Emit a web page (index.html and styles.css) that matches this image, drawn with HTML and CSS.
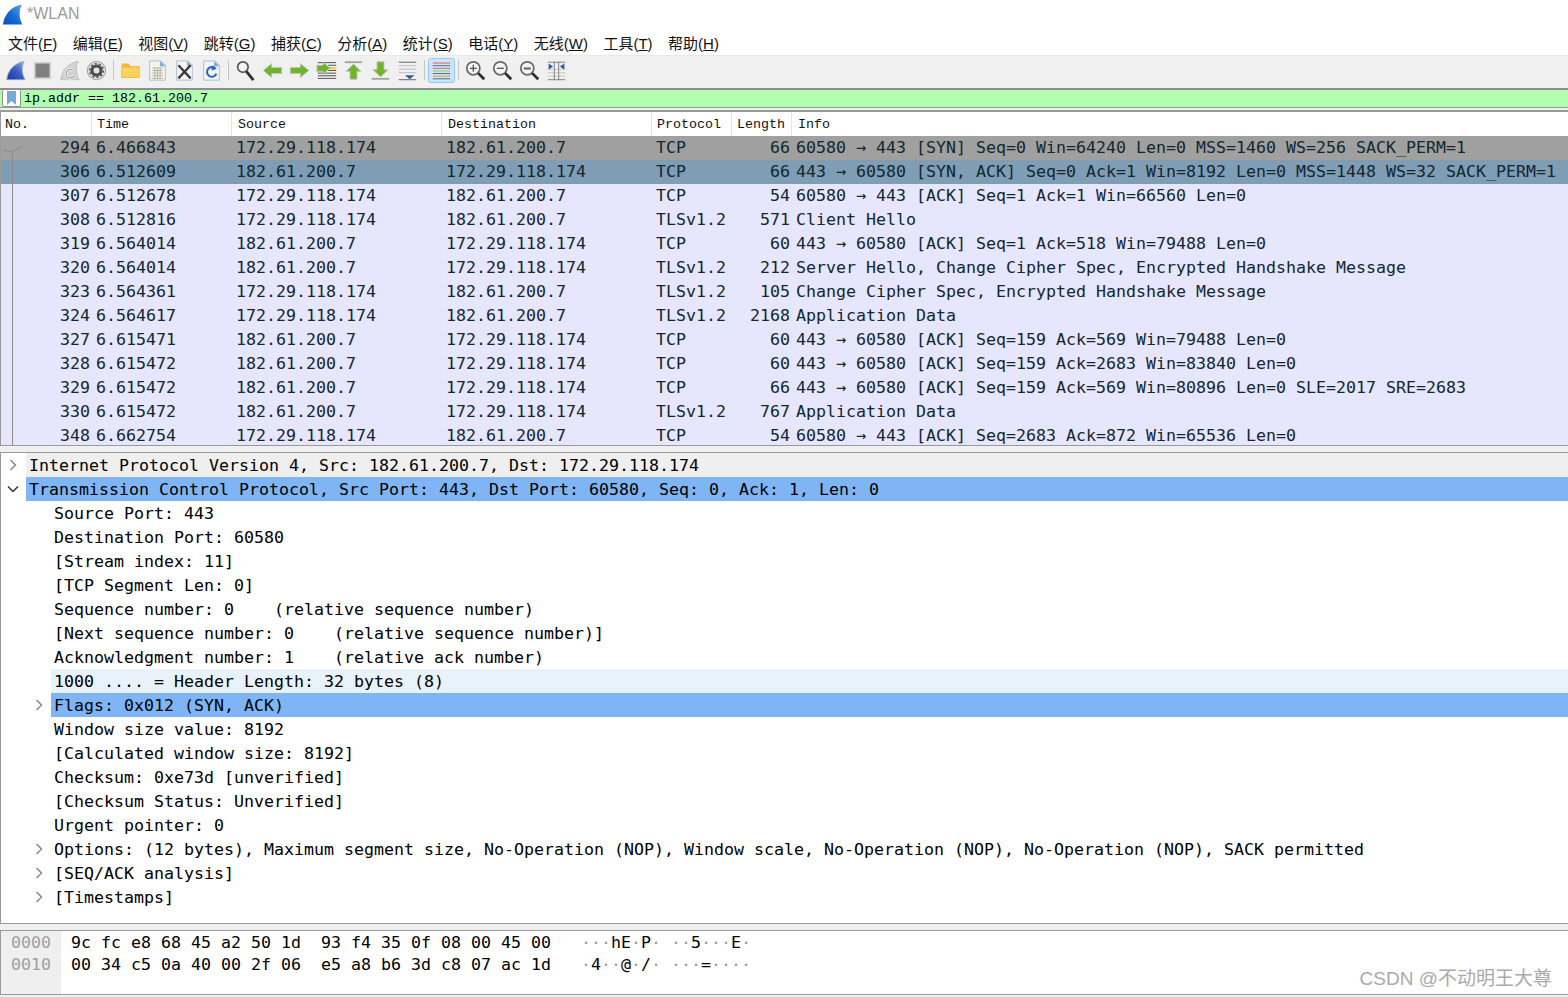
FILE: index.html
```html
<!DOCTYPE html>
<html lang="zh">
<head>
<meta charset="utf-8">
<title>*WLAN</title>
<link rel="stylesheet" href="styles.css">
</head>
<body>
<div class="app">
  <header class="titlebar">
    <svg class="logo" width="20" height="21" viewBox="0 0 20 21"><defs><linearGradient id="fin" x1="1" y1="0" x2="0" y2="1"><stop offset="0" stop-color="#5aa8ee"/><stop offset="0.55" stop-color="#1668d2"/><stop offset="1" stop-color="#0d4fb4"/></linearGradient></defs><path d="M0 20.500C1 11 8 2 19 0.500c-3 5-3.500 13 .5 20z" fill="url(#fin)"/></svg>
    <span class="title">*WLAN</span>
  </header>
  <nav class="menubar">
    <span>文件(<u>F</u>)</span><span>编辑(<u>E</u>)</span><span>视图(<u>V</u>)</span><span>跳转(<u>G</u>)</span><span>捕获(<u>C</u>)</span><span>分析(<u>A</u>)</span><span>统计(<u>S</u>)</span><span>电话(<u>Y</u>)</span><span>无线(<u>W</u>)</span><span>工具(<u>T</u>)</span><span>帮助(<u>H</u>)</span>
  </nav>
  <div class="toolbar">
    <span class="tool"><svg viewBox="0 0 24 24"><defs><linearGradient id="sh" x1="1" y1="0" x2="0" y2="1"><stop offset="0" stop-color="#9db4dc"/><stop offset="0.5" stop-color="#3a5cc4"/><stop offset="1" stop-color="#1c35a0"/></linearGradient></defs><path d="M2 22.500C3 12 11 3 22 1.500c-3 6-3 14 1 21z" fill="url(#sh)" stroke="#a9b2c6" stroke-width=".8"/></svg></span>
    <span class="tool"><svg viewBox="0 0 24 24"><rect x="2" y="2" width="20" height="20" fill="#d6d6d6"/><rect x="4" y="4" width="16" height="16" fill="#808080"/></svg></span>
    <span class="tool"><svg viewBox="0 0 24 24"><path d="M2 22.500C3 12 11 3 22 1.500c-3 6-3 14 1 21z" fill="#d2d2d2" stroke="#bdbdbd"/><path d="M15 11a5 5 0 1 0 3 6" fill="none" stroke="#fff" stroke-width="3"/><path d="M15 11a5 5 0 1 0 3 6" fill="none" stroke="#8f8f8f" stroke-width="1.200"/></svg></span>
    <span class="tool"><svg viewBox="0 0 24 24"><circle cx="12" cy="12" r="10.500" fill="#dedede" stroke="#959595"/><circle cx="12" cy="12" r="7" fill="#4c4c4c"/><circle cx="12" cy="12" r="7.800" fill="none" stroke="#4c4c4c" stroke-width="1.600" stroke-dasharray="2.500 2.400"/><circle cx="12" cy="12" r="3.400" fill="#e4e4e4"/></svg></span>
    <i class="tsep"></i>
    <span class="tool"><svg viewBox="0 0 24 24"><path d="M2 4h8l2 3h10v6H2z" fill="#f4b632"/><path d="M2 8h20v12H2z" fill="#fbd45e" stroke="#efb73e"/></svg></span>
    <span class="tool"><svg viewBox="0 0 24 24"><path d="M3 1h13l5 5v17H3z" fill="#f3f3e8" stroke="#a8bacb"/><path d="M15 1l6 6h-6z" fill="#7ba6d8"/><path d="M6 9h12M6 12h12M6 15h12M6 18h12M6 21h12M9 9v12M12 9v12M15 9v12" stroke="#a8a89c" stroke-width=".9"/></svg></span>
    <span class="tool"><svg viewBox="0 0 24 24"><path d="M3 1h13l5 5v17H3z" fill="#f3f3f3" stroke="#a8bacb"/><path d="M15 1l6 6h-6z" fill="#7ba6d8"/><path d="M5 6l14 15M19 6L5 21" stroke="#3a3a3a" stroke-width="2.600"/></svg></span>
    <span class="tool"><svg viewBox="0 0 24 24"><path d="M3 1h13l5 5v17H3z" fill="#f3f3f3" stroke="#a8bacb"/><path d="M15 1l6 6h-6z" fill="#7ba6d8"/><path d="M16.500 10a5.500 5.500 0 1 0 1 5.500" fill="none" stroke="#2b66b8" stroke-width="2.400"/><path d="M13 6l5 4-6 2z" fill="#2b66b8"/></svg></span>
    <i class="tsep"></i>
    <span class="tool"><svg viewBox="0 0 24 24"><circle cx="9" cy="8" r="6" fill="#f6f6f6" stroke="#5a5a5a" stroke-width="2"/><path d="M13 13l8 10" stroke="#2e2e2e" stroke-width="3.200"/></svg></span>
    <span class="tool"><svg viewBox="0 0 24 24"><path d="M1.500 12L11 4v4.500h11.500v7H11V20z" fill="#6fb52c" stroke="#c2c2c2"/></svg></span>
    <span class="tool"><svg viewBox="0 0 24 24"><path d="M22.500 12L13 4v4.500H1.500v7H13V20z" fill="#6fb52c" stroke="#c2c2c2"/></svg></span>
    <span class="tool"><svg viewBox="0 0 24 24"><path d="M2 3h21M14 6h9M16 9h7M14 12h9M2 15h21M2 18h21M2 21h21" stroke="#3e3e3e"/><path d="M17 8h6v3h-6z" fill="#f0dc3c"/><path d="M16 9L8 2.500v3.500H1v7h7v3.500z" fill="#6fb52c" stroke="#c2c2c2"/></svg></span>
    <span class="tool"><svg viewBox="0 0 24 24"><path d="M2 2.500h20" stroke="#a0a0a0" stroke-width="2"/><path d="M12 4.500l8.500 8.500H16v9H8v-9H3.500z" fill="#6fb52c" stroke="#c2c2c2"/></svg></span>
    <span class="tool"><svg viewBox="0 0 24 24"><path d="M2 21.500h20" stroke="#a0a0a0" stroke-width="2"/><path d="M12 19.500l8.500-8.500H16V2H8v9H3.500z" fill="#6fb52c" stroke="#c2c2c2"/></svg></span>
    <span class="tool"><svg viewBox="0 0 24 24"><path d="M2 2.500h20M2 22.500h20" stroke="#555"/><path d="M2 6.500h20M2 10.500h20M2 14.500h20" stroke="#b5b5b5"/><path d="M9 17.500h11l-5.500 4.500z" fill="#2a5ca8"/></svg></span>
    <i class="tsep"></i>
    <span class="tool active"><svg viewBox="0 0 24 24"><path d="M2 3.500h20" stroke="#e0504c"/><path d="M2 6.500h20" stroke="#4a5a66"/><path d="M2 9.500h20" stroke="#c85a7a"/><path d="M2 12.500h20" stroke="#9ac53c"/><path d="M2 15.500h20" stroke="#4a5a66"/><path d="M2 18.500h20" stroke="#e09030"/><path d="M2 21.500h20" stroke="#4a5a66"/></svg></span>
    <i class="tsep"></i>
    <span class="tool"><svg viewBox="0 0 24 24"><circle cx="9.500" cy="9.500" r="7.500" fill="#f4f4f4" stroke="#6a6a6a" stroke-width="2"/><path d="M5.500 9.500h8M9.500 5.500v8" stroke="#555" stroke-width="1.500"/><path d="M15 15l7 7" stroke="#2e2e2e" stroke-width="3.200"/></svg></span>
    <span class="tool"><svg viewBox="0 0 24 24"><circle cx="9.500" cy="9.500" r="7.500" fill="#f4f4f4" stroke="#6a6a6a" stroke-width="2"/><path d="M5.500 9.500h8" stroke="#555" stroke-width="1.500"/><path d="M15 15l7 7" stroke="#2e2e2e" stroke-width="3.200"/></svg></span>
    <span class="tool"><svg viewBox="0 0 24 24"><circle cx="9.500" cy="9.500" r="7.500" fill="#f4f4f4" stroke="#6a6a6a" stroke-width="2"/><path d="M5.500 8.500h8v2.500h-8z" fill="#6a6a6a"/><path d="M15 15l7 7" stroke="#2e2e2e" stroke-width="3.200"/></svg></span>
    <span class="tool"><svg viewBox="0 0 24 24"><path d="M2 2.500h20M2 22.500h20" stroke="#777"/><path d="M2 10.500h20M2 14.500h20M2 18.500h20" stroke="#c4c4c4"/><path d="M9.500 2v21M14.500 2v21" stroke="#777"/><path d="M3 4l5 3.500L3 11zM21 4l-5 3.500 5 3.500z" fill="#2a5ca8"/></svg></span>
  </div>
  <div class="filterbar">
    <span class="bookmark"><svg width="9" height="14" viewBox="0 0 9 14"><path d="M0 0h9v14L4.500 10 0 14z" fill="#7ba6d8"/></svg></span>
    <span class="filter-input">ip.addr == 182.61.200.7</span>
  </div>
  <section class="packets">
    <div class="phead">
      <span class="hc first">No.</span><span class="hc">Time</span><span class="hc wide">Source</span><span class="hc wide">Destination</span><span class="hc">Protocol</span><span class="hc">Length</span><span class="hc wide last">Info</span>
    </div>
    <div class="pbody">
      <svg class="conv" width="26" height="310" viewBox="0 0 26 310"><path d="M2 14l9 2 10-6M11.500 16v294" fill="none" stroke="#8b8b8b"/></svg>
      <div class="row syn"><span>294</span><span>6.466843</span><span>172.29.118.174</span><span>182.61.200.7</span><span>TCP</span><span>66</span><span>60580 → 443 [SYN] Seq=0 Win=64240 Len=0 MSS=1460 WS=256 SACK_PERM=1</span></div>
      <div class="row sel"><span>306</span><span>6.512609</span><span>182.61.200.7</span><span>172.29.118.174</span><span>TCP</span><span>66</span><span>443 → 60580 [SYN, ACK] Seq=0 Ack=1 Win=8192 Len=0 MSS=1448 WS=32 SACK_PERM=1</span></div>
      <div class="row"><span>307</span><span>6.512678</span><span>172.29.118.174</span><span>182.61.200.7</span><span>TCP</span><span>54</span><span>60580 → 443 [ACK] Seq=1 Ack=1 Win=66560 Len=0</span></div>
      <div class="row"><span>308</span><span>6.512816</span><span>172.29.118.174</span><span>182.61.200.7</span><span>TLSv1.2</span><span>571</span><span>Client Hello</span></div>
      <div class="row"><span>319</span><span>6.564014</span><span>182.61.200.7</span><span>172.29.118.174</span><span>TCP</span><span>60</span><span>443 → 60580 [ACK] Seq=1 Ack=518 Win=79488 Len=0</span></div>
      <div class="row"><span>320</span><span>6.564014</span><span>182.61.200.7</span><span>172.29.118.174</span><span>TLSv1.2</span><span>212</span><span>Server Hello, Change Cipher Spec, Encrypted Handshake Message</span></div>
      <div class="row"><span>323</span><span>6.564361</span><span>172.29.118.174</span><span>182.61.200.7</span><span>TLSv1.2</span><span>105</span><span>Change Cipher Spec, Encrypted Handshake Message</span></div>
      <div class="row"><span>324</span><span>6.564617</span><span>172.29.118.174</span><span>182.61.200.7</span><span>TLSv1.2</span><span>2168</span><span>Application Data</span></div>
      <div class="row"><span>327</span><span>6.615471</span><span>182.61.200.7</span><span>172.29.118.174</span><span>TCP</span><span>60</span><span>443 → 60580 [ACK] Seq=159 Ack=569 Win=79488 Len=0</span></div>
      <div class="row"><span>328</span><span>6.615472</span><span>182.61.200.7</span><span>172.29.118.174</span><span>TCP</span><span>60</span><span>443 → 60580 [ACK] Seq=159 Ack=2683 Win=83840 Len=0</span></div>
      <div class="row"><span>329</span><span>6.615472</span><span>182.61.200.7</span><span>172.29.118.174</span><span>TCP</span><span>66</span><span>443 → 60580 [ACK] Seq=159 Ack=569 Win=80896 Len=0 SLE=2017 SRE=2683</span></div>
      <div class="row"><span>330</span><span>6.615472</span><span>182.61.200.7</span><span>172.29.118.174</span><span>TLSv1.2</span><span>767</span><span>Application Data</span></div>
      <div class="row"><span>348</span><span>6.662754</span><span>172.29.118.174</span><span>182.61.200.7</span><span>TCP</span><span>54</span><span>60580 → 443 [ACK] Seq=2683 Ack=872 Win=65536 Len=0</span></div>
    </div>
  </section>
  <section class="details">
    <div class="node top hover"><svg class="chev dim" viewBox="0 0 12 12"><path d="M3.500 1l5 5-5 5"/></svg><span class="nt">Internet Protocol Version 4, Src: 182.61.200.7, Dst: 172.29.118.174</span></div>
    <div class="node top selected"><svg class="chev dark" viewBox="0 0 12 12"><path d="M1 3.500l5 5 5-5"/></svg><span class="nt">Transmission Control Protocol, Src Port: 443, Dst Port: 60580, Seq: 0, Ack: 1, Len: 0</span></div>
    <div class="node leaf"><span class="nt">Source Port: 443</span></div>
    <div class="node leaf"><span class="nt">Destination Port: 60580</span></div>
    <div class="node leaf"><span class="nt">[Stream index: 11]</span></div>
    <div class="node leaf"><span class="nt">[TCP Segment Len: 0]</span></div>
    <div class="node leaf"><span class="nt">Sequence number: 0    (relative sequence number)</span></div>
    <div class="node leaf"><span class="nt">[Next sequence number: 0    (relative sequence number)]</span></div>
    <div class="node leaf"><span class="nt">Acknowledgment number: 1    (relative ack number)</span></div>
    <div class="node leaf light"><span class="nt">1000 .... = Header Length: 32 bytes (8)</span></div>
    <div class="node leaf selected"><svg class="chev sub dim" viewBox="0 0 12 12"><path d="M3.500 1l5 5-5 5"/></svg><span class="nt">Flags: 0x012 (SYN, ACK)</span></div>
    <div class="node leaf"><span class="nt">Window size value: 8192</span></div>
    <div class="node leaf"><span class="nt">[Calculated window size: 8192]</span></div>
    <div class="node leaf"><span class="nt">Checksum: 0xe73d [unverified]</span></div>
    <div class="node leaf"><span class="nt">[Checksum Status: Unverified]</span></div>
    <div class="node leaf"><span class="nt">Urgent pointer: 0</span></div>
    <div class="node leaf"><svg class="chev sub dim" viewBox="0 0 12 12"><path d="M3.500 1l5 5-5 5"/></svg><span class="nt">Options: (12 bytes), Maximum segment size, No-Operation (NOP), Window scale, No-Operation (NOP), No-Operation (NOP), SACK permitted</span></div>
    <div class="node leaf"><svg class="chev sub dim" viewBox="0 0 12 12"><path d="M3.500 1l5 5-5 5"/></svg><span class="nt">[SEQ/ACK analysis]</span></div>
    <div class="node leaf"><svg class="chev sub dim" viewBox="0 0 12 12"><path d="M3.500 1l5 5-5 5"/></svg><span class="nt">[Timestamps]</span></div>
  </section>
  <section class="bytes">
    <div class="offsets"><div>0000</div><div>0010</div></div>
    <div class="hex">
      <div class="hl">9c fc e8 68 45 a2 50 1d  93 f4 35 0f 08 00 45 00   <b>···</b>hE<b>·</b>P<b>·</b> <b>··</b>5<b>···</b>E<b>·</b></div>
      <div class="hl">00 34 c5 0a 40 00 2f 06  e5 a8 b6 3d c8 07 ac 1d   <b>·</b>4<b>··</b>@<b>·</b>/<b>·</b> <b>···</b>=<b>····</b></div>
    </div>
    <span class="watermark">CSDN @不动明王大尊</span>
  </section>
</div>
</body>
</html>
```
FILE: styles.css
```css
* { box-sizing: border-box; }
html, body { margin: 0; padding: 0; }
body { background: #f0f0f0; overflow: hidden; }
.app { width: 1568px; height: 997px; display: flex; flex-direction: column; }
.app > * { flex: none; }

.titlebar { height: 28px; background: #fff; display: flex; align-items: center; padding-left: 3px; gap: 4px; }
.logo { display: block; }
.title { font: 16px "Liberation Sans", sans-serif; color: #9a9a9a; }

.menubar { height: 28px; background: #fff; display: flex; align-items: center; gap: 15.5px; padding: 2px 0 0 8px; font: 15px "Liberation Sans", "Noto Sans CJK SC", sans-serif; color: #111; border-bottom: 1px solid #e8e8e8; }
.menubar span { white-space: nowrap; }

.toolbar { height: 28px; display: flex; align-items: center; padding-left: 2px; background: #f0f0f0; }
.tool { width: 27px; height: 25px; display: flex; align-items: center; justify-content: center; flex: none; }
.tool svg { width: 21px; height: 21px; display: block; }
.tool.active { background: #cde5fa; border: 1px solid #93c8f5; border-radius: 3px; }
.tsep { width: 1px; height: 20px; background: #c6c6c6; margin: 0 3px; flex: none; }

.filterbar { height: 20px; margin-top: 4px; display: flex; align-items: stretch; border-top: 2px solid #8e8e8e; border-bottom: 1px solid #9a9a9a; background: #afffaf; }
.bookmark { width: 19px; background: #fff; border: 1px solid #8e8e8e; border-top: 0; border-radius: 2px; margin-left: 2px; display: flex; align-items: center; justify-content: center; flex: none; }
.filter-input { font: 13.33px/17px "Liberation Mono", monospace; color: #000; padding-left: 3px; white-space: pre; }

.packets { height: 336px; margin-top: 2px; border: 1px solid #9a9a9a; border-width: 2px 0 1px 1px; background: #fff; display: flex; flex-direction: column; overflow: hidden; }
.phead { height: 24px; flex: none; display: grid; grid-template-columns: 91px 140px 210px 210px 80px 60px 1fr; background: #fff; font: 13.33px/26px "Liberation Mono", monospace; color: #111; overflow: hidden; }
.hc { padding-left: 5px; border-right: 1px solid #e4e4e4; }
.hc.first { padding-left: 4px; }
.hc.wide { padding-left: 6px; }
.hc.last { border-right: 0; }
.pbody { position: relative; flex: 1; overflow: hidden; }
.conv { position: absolute; left: 0; top: 0; z-index: 1; }
.row { height: 24px; display: grid; grid-template-columns: 91px 140px 210px 210px 80px 60px 1fr; background: #e7e6ff; color: #12272e; font: 16.62px/24px "DejaVu Sans Mono", monospace; white-space: pre; }
.row span { padding-left: 4px; }
.row span:first-child, .row span:nth-child(6) { padding: 0 2px 0 0; text-align: right; }
.row.syn { background: #a0a0a0; }
.row.sel { background: #7f9db5; }

.details { height: 472px; margin-top: 6px; border-top: 1px solid #9a9a9a; border-bottom: 1px solid #9a9a9a; border-left: 1px solid #9a9a9a; background: #fff; overflow: hidden; }
.node { height: 24px; position: relative; font: 16.62px/26px "DejaVu Sans Mono", monospace; color: #000; white-space: pre; }
.node.top { margin-left: 25px; padding-left: 3px; }
.node.leaf { margin-left: 50px; padding-left: 3px; }
.node.hover { background: #efefef; }
.node.selected { background: #7fb5f5; }
.node.light { background: #e8f2fb; }
.chev { position: absolute; width: 12px; height: 12px; left: -19px; top: 6px; fill: none; stroke-width: 1.500; }
.chev.sub { left: -18px; }
.chev.dim { stroke: #8a8a8a; }
.chev.dark { stroke: #333; }

.bytes { position: relative; height: 65px; margin-top: 6px; border-top: 1px solid #9a9a9a; border-bottom: 1px solid #9a9a9a; background: #fff; display: flex; font: 16.62px/22px "DejaVu Sans Mono", monospace; }
.offsets { width: 61px; background: #efefef; padding: 1px 0 0 10px; color: #a0a0a0; border-left: 1px solid #9a9a9a; }
.hex { padding: 1px 0 0 10px; color: #000; }
.hl { white-space: pre; }
.hex b { font-weight: normal; color: #9a9a9a; }
.watermark { position: absolute; right: 16px; bottom: 2px; font: 19px/26px "Liberation Sans", "Noto Sans CJK SC", sans-serif; color: #aaa; }
```
